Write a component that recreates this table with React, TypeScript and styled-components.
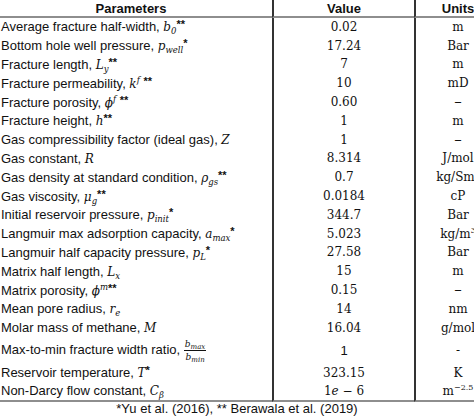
import React from "react";
import styled, { createGlobalStyle } from "styled-components";

const GlobalStyle = createGlobalStyle`
  html, body {
    margin: 0;
    padding: 0;
    background: #fff;
  }
  body {
    font-family: "Liberation Sans", Arial, sans-serif;
    color: #111;
  }
`;

const Page = styled.div`
  width: 474px;
  height: 417px;
  overflow: hidden;
  background: #fff;
`;

const Table = styled.table`
  width: 500px;
  table-layout: fixed;
  border-collapse: separate;
  border-spacing: 0;
`;

const HeadCell = styled.th<{ $col: "param" | "value" | "unit" }>`
  box-sizing: border-box;
  height: 18px;
  padding: 0 ${(p) => (p.$col === "param" ? "10px" : "0")} 0 0;
  font: bold 13px "Liberation Sans", Arial, sans-serif;
  color: #111;
  text-align: center;
  vertical-align: middle;
  border-bottom: 2px solid #8e8e8e;
  border-left: ${(p) => (p.$col === "param" ? "none" : "2px solid #333")};
  white-space: nowrap;
`;

const BodyRow = styled.tr<{ $tall?: boolean }>`
  height: ${(p) => (p.$tall ? "26.4px" : "18.8px")};

  &:last-child > td {
    border-bottom: 2px solid #8e8e8e;
  }
`;

const ParamCell = styled.td`
  padding: 0 0 0 1px;
  font-size: 13px;
  line-height: 15px;
  white-space: nowrap;
  vertical-align: middle;
  color: #111;
`;

const ValueCell = styled.td`
  padding: 0;
  border-left: 2px solid #333;
  text-align: center;
  vertical-align: middle;
  font-family: "DejaVu Serif", serif;
  font-size: 12px;
  line-height: 15px;
  white-space: nowrap;
  color: #111;
`;

const UnitCell = styled(ValueCell)``;

// math symbols: italic serif letter, with small sub / superscripts
const M = styled.i`
  font-family: "DejaVu Serif", serif;
  font-style: italic;
  font-size: 12px;
`;

const Sub = styled.span`
  font-family: "DejaVu Serif", serif;
  font-style: italic;
  font-size: 8.5px;
  vertical-align: -3px;
  line-height: 0;
`;

const Sup = styled.span`
  font-family: "DejaVu Serif", serif;
  font-style: italic;
  font-size: 8.5px;
  vertical-align: 5px;
  line-height: 0;
`;

const Stars = styled.span`
  font-size: 11px;
  font-weight: bold;
  vertical-align: 3px;
  line-height: 0;
`;

const UnitSup = styled.span`
  font-size: 8px;
  vertical-align: 5px;
  line-height: 0;
`;

const Dash = styled.span`
  font-size: 15px;
  line-height: 0;
`;

const Fraction = styled.span`
  display: inline-flex;
  flex-direction: column;
  align-items: center;
  vertical-align: middle;
  line-height: 10px;
`;

const FracPart = styled.span`
  font-size: 9px;
  padding: 0 1px;

  & > i {
    font-size: 9px;
  }

  & > span {
    font-size: 7px;
    vertical-align: -2px;
  }

  &:first-child {
    border-bottom: 1px solid #111;
    padding-bottom: 1px;
  }

  &:last-child {
    padding-top: 1px;
  }
`;

const PlainOne = styled.span`
  font-family: "Liberation Sans", Arial, sans-serif;
  font-size: 13px;
`;

const Footnote = styled.div`
  text-align: center;
  font-size: 13px;
  line-height: 14px;
  color: #111;
`;

type Row = {
  param: React.ReactNode;
  value: React.ReactNode;
  unit: React.ReactNode;
  tall?: boolean;
};

const rows: Row[] = [
  {
    param: (
      <>
        Average fracture half-width, <M>b</M>
        <Sub>0</Sub>
        <Stars>**</Stars>
      </>
    ),
    value: "0.02",
    unit: "m",
  },
  {
    param: (
      <>
        Bottom hole well pressure, <M>p</M>
        <Sub>well</Sub>
        <Stars>*</Stars>
      </>
    ),
    value: "17.24",
    unit: "Bar",
  },
  {
    param: (
      <>
        Fracture length, <M>L</M>
        <Sub>y</Sub>
        <Stars>**</Stars>
      </>
    ),
    value: "7",
    unit: "m",
  },
  {
    param: (
      <>
        Fracture permeability, <M>k</M>
        <Sup>f</Sup> <Stars>**</Stars>
      </>
    ),
    value: "10",
    unit: "mD",
  },
  {
    param: (
      <>
        Fracture porosity, <M>ϕ</M>
        <Sup>f</Sup> <Stars>**</Stars>
      </>
    ),
    value: "0.60",
    unit: <Dash>–</Dash>,
  },
  {
    param: (
      <>
        Fracture height, <M>h</M>
        <Stars>**</Stars>
      </>
    ),
    value: "1",
    unit: "m",
  },
  {
    param: (
      <>
        Gas compressibility factor (ideal gas), <M>Z</M>
      </>
    ),
    value: "1",
    unit: <Dash>–</Dash>,
  },
  {
    param: (
      <>
        Gas constant, <M>R</M>
      </>
    ),
    value: "8.314",
    unit: "J/mol",
  },
  {
    param: (
      <>
        Gas density at standard condition, <M>ρ</M>
        <Sub>gs</Sub>
        <Stars>**</Stars>
      </>
    ),
    value: "0.7",
    unit: (
      <>
        kg/Sm<UnitSup>3</UnitSup>
      </>
    ),
  },
  {
    param: (
      <>
        Gas viscosity, <M>μ</M>
        <Sub>g</Sub>
        <Stars>**</Stars>
      </>
    ),
    value: "0.0184",
    unit: "cP",
  },
  {
    param: (
      <>
        Initial reservoir pressure, <M>p</M>
        <Sub>init</Sub>
        <Stars>*</Stars>
      </>
    ),
    value: "344.7",
    unit: "Bar",
  },
  {
    param: (
      <>
        Langmuir max adsorption capacity, <M>a</M>
        <Sub>max</Sub>
        <Stars>*</Stars>
      </>
    ),
    value: "5.023",
    unit: (
      <>
        kg/m<UnitSup>3</UnitSup>
      </>
    ),
  },
  {
    param: (
      <>
        Langmuir half capacity pressure, <M>p</M>
        <Sub>L</Sub>
        <Stars>*</Stars>
      </>
    ),
    value: "27.58",
    unit: "Bar",
  },
  {
    param: (
      <>
        Matrix half length, <M>L</M>
        <Sub>x</Sub>
      </>
    ),
    value: "15",
    unit: "m",
  },
  {
    param: (
      <>
        Matrix porosity, <M>ϕ</M>
        <Sup>m</Sup>
        <Stars>**</Stars>
      </>
    ),
    value: "0.15",
    unit: <Dash>–</Dash>,
  },
  {
    param: (
      <>
        Mean pore radius, <M>r</M>
        <Sub>e</Sub>
      </>
    ),
    value: "14",
    unit: "nm",
  },
  {
    param: (
      <>
        Molar mass of methane, <M>M</M>
      </>
    ),
    value: "16.04",
    unit: "g/mol",
  },
  {
    param: (
      <>
        Max-to-min fracture width ratio,{" "}
        <Fraction>
          <FracPart>
            <M>b</M>
            <Sub>max</Sub>
          </FracPart>
          <FracPart>
            <M>b</M>
            <Sub>min</Sub>
          </FracPart>
        </Fraction>
      </>
    ),
    value: <PlainOne>1</PlainOne>,
    unit: "-",
    tall: true,
  },
  {
    param: (
      <>
        Reservoir temperature, <M>T</M>
        <Stars>*</Stars>
      </>
    ),
    value: "323.15",
    unit: "K",
  },
  {
    param: (
      <>
        Non-Darcy flow constant, <M>C</M>
        <Sub>β</Sub>
      </>
    ),
    value: (
      <>
        1<M>e</M> − 6
      </>
    ),
    unit: (
      <>
        m<UnitSup>−2.5</UnitSup>
      </>
    ),
  },
];

export default function App() {
  return (
    <>
      <GlobalStyle />
      <Page>
        <Table>
          <colgroup>
            <col style={{ width: 272 }} />
            <col style={{ width: 142 }} />
            <col style={{ width: 86 }} />
          </colgroup>
          <thead>
            <tr>
              <HeadCell $col="param">Parameters</HeadCell>
              <HeadCell $col="value">Value</HeadCell>
              <HeadCell $col="unit">Units</HeadCell>
            </tr>
          </thead>
          <tbody>
            {rows.map((r, i) => (
              <BodyRow key={i} $tall={r.tall}>
                <ParamCell>{r.param}</ParamCell>
                <ValueCell>{r.value}</ValueCell>
                <UnitCell>{r.unit}</UnitCell>
              </BodyRow>
            ))}
          </tbody>
        </Table>
        <Footnote>*Yu et al. (2016), ** Berawala et al. (2019)</Footnote>
      </Page>
    </>
  );
}
